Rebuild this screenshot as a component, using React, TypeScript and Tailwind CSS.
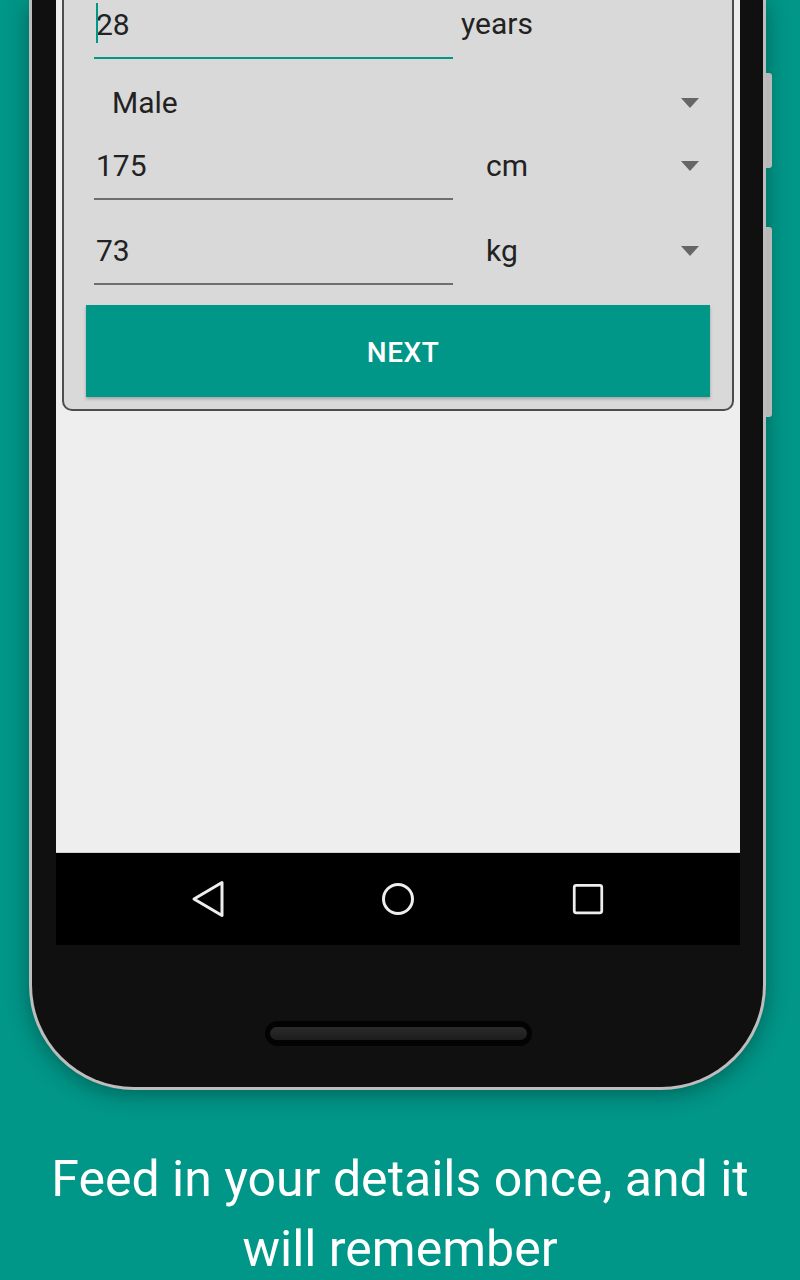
import React from "react";

const Caret = () => (
  <svg width="20" height="12" viewBox="0 0 20 12" className="shrink-0">
    <polygon points="1,1 19,1 10,11" fill="#666666" />
  </svg>
);

export default function App() {
  return (
    <div
      className="w-[800px] h-[1280px] bg-[#009688] overflow-hidden"
      style={{ fontFamily: "Roboto, 'Noto Sans', sans-serif" }}
    >
      {/* Phone */}
      <div className="relative ml-[29px] w-[737px] h-[1090px] bg-[#101010] border-[3px] border-t-0 border-[#bdbdbd] rounded-b-[105px] shadow-[0_4px_22px_rgba(0,0,0,0.35)] flex flex-col pl-[24px] pr-[23px]">
        {/* side buttons */}
        <div className="absolute right-[-9px] top-[73px] w-[6px] h-[95px] rounded-r-[3px] bg-[#b9b9b9]" />
        <div className="absolute right-[-9px] top-[227px] w-[6px] h-[190px] rounded-r-[3px] bg-[#b9b9b9]" />

        {/* Screen */}
        <div className="w-[684px] h-[853px] bg-[#eeeeee] px-[6px] border-b border-[#cfcfcf]">
          <div className="bg-[#d9d9d9] border-2 border-t-0 border-[#4d4d4d] rounded-b-[10px] pl-[30px] pr-[32px] pb-[12px] text-[30px] leading-none text-[#222222]">
            {/* Age row */}
            <div className="flex items-end h-[59px]">
              <div className="relative w-[359px] border-b-2 border-[#009688] pb-[17px] pl-[2px]">
                <span>28</span>
                <span className="absolute left-[2px] top-[-7px] w-[2px] h-[40px] bg-[#009688]" />
              </div>
              <div className="ml-[8px] pb-[20px]">years</div>
            </div>
            {/* Gender row */}
            <div className="flex items-end h-[71px] pb-[12px]">
              <div className="flex-1 flex items-center justify-between pl-[18px]">
                <span>Male</span>
                <Caret />
              </div>
            </div>
            {/* Height row */}
            <div className="flex items-end h-[70px]">
              <div className="w-[359px] border-b-2 border-[#6e6e6e] pb-[17px] pl-[2px]">175</div>
              <div className="flex-1 ml-[33px] pb-[19px] flex items-center justify-between">
                <span>cm</span>
                <Caret />
              </div>
            </div>
            {/* Weight row */}
            <div className="flex items-end h-[85px]">
              <div className="w-[359px] border-b-2 border-[#6e6e6e] pb-[17px] pl-[2px]">73</div>
              <div className="flex-1 ml-[33px] pb-[19px] flex items-center justify-between">
                <span>kg</span>
                <Caret />
              </div>
            </div>
            {/* Next button */}
            <div className="mt-[20px] ml-[-8px] mr-[-10px] h-[92px] bg-[#009688] shadow-[0_2px_3px_rgba(0,0,0,0.25)] flex items-center justify-center pl-[10px] pt-[3px] text-white text-[28px] font-medium tracking-[0.5px]">
              NEXT
            </div>
          </div>
        </div>

        {/* Nav bar */}
        <div className="w-[684px] h-[92px] bg-black flex items-center justify-center gap-[150px]">
          <svg width="40" height="40" viewBox="0 0 40 40">
            <polygon
              points="34,3.5 6,20 34,36.5"
              fill="none"
              stroke="#eeeeee"
              strokeWidth="3"
              strokeLinejoin="round"
            />
          </svg>
          <svg width="40" height="40" viewBox="0 0 40 40">
            <circle cx="20" cy="20" r="14.5" fill="none" stroke="#eeeeee" strokeWidth="3" />
          </svg>
          <svg width="40" height="40" viewBox="0 0 40 40">
            <rect x="6.25" y="6.25" width="27.5" height="27.5" rx="2" fill="none" stroke="#eeeeee" strokeWidth="2.75" />
          </svg>
        </div>

        {/* Bottom bezel */}
        <div className="flex-1 flex justify-center pt-[76px]">
          <div className="w-[267px] h-[25px] rounded-full bg-[#030303] flex items-center justify-center">
            <div className="w-[257px] h-[13px] rounded-full bg-gradient-to-b from-[#2b2b2b] to-[#1c1c1c]" />
          </div>
        </div>
      </div>

      {/* Caption */}
      <div className="pt-[54px] text-center text-white text-[50px] leading-[70px]">
        Feed in your details once, and it
        <br />
        will remember
      </div>
    </div>
  );
}
